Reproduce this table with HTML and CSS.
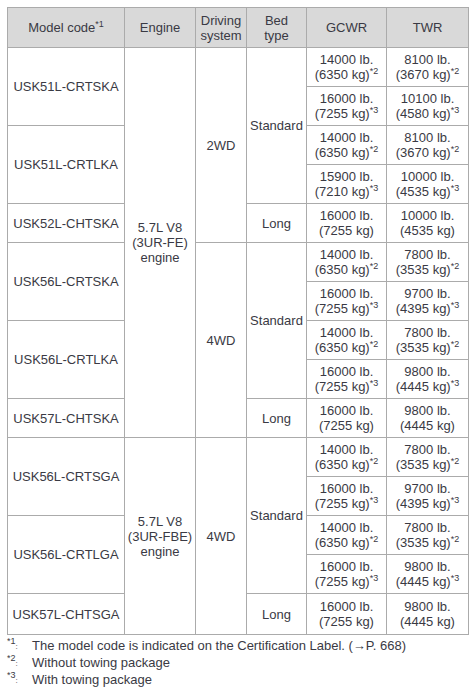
FILE: index.html
```html
<!DOCTYPE html>
<html>
<head>
<meta charset="utf-8">
<link rel="stylesheet" href="styles.css">
</head>
<body>
<div class="page">
<table class="spec">
<colgroup>
<col class="c1"><col class="c2"><col class="c3"><col class="c4"><col class="c5"><col class="c6">
</colgroup>
<thead>
<tr class="head">
<th>Model code<sup>*1</sup></th><th>Engine</th><th>Driving system</th><th>Bed<br>type</th><th>GCWR</th><th>TWR</th>
</tr>
</thead>
<tbody>
<tr>
<td rowspan="2">USK51L-CRTSKA</td>
<td rowspan="10">5.7L V8<br>(3UR-FE)<br>engine</td>
<td rowspan="5">2WD</td>
<td rowspan="4">Standard</td>
<td>14000 lb.<br>(6350 kg)<sup>*2</sup></td><td>8100 lb.<br>(3670 kg)<sup>*2</sup></td>
</tr>
<tr><td>16000 lb.<br>(7255 kg)<sup>*3</sup></td><td>10100 lb.<br>(4580 kg)<sup>*3</sup></td></tr>
<tr>
<td rowspan="2">USK51L-CRTLKA</td>
<td>14000 lb.<br>(6350 kg)<sup>*2</sup></td><td>8100 lb.<br>(3670 kg)<sup>*2</sup></td>
</tr>
<tr><td>15900 lb.<br>(7210 kg)<sup>*3</sup></td><td>10000 lb.<br>(4535 kg)<sup>*3</sup></td></tr>
<tr>
<td>USK52L-CHTSKA</td><td>Long</td>
<td>16000 lb.<br>(7255 kg)</td><td>10000 lb.<br>(4535 kg)</td>
</tr>
<tr>
<td rowspan="2">USK56L-CRTSKA</td>
<td rowspan="5">4WD</td>
<td rowspan="4">Standard</td>
<td>14000 lb.<br>(6350 kg)<sup>*2</sup></td><td>7800 lb.<br>(3535 kg)<sup>*2</sup></td>
</tr>
<tr><td>16000 lb.<br>(7255 kg)<sup>*3</sup></td><td>9700 lb.<br>(4395 kg)<sup>*3</sup></td></tr>
<tr>
<td rowspan="2">USK56L-CRTLKA</td>
<td>14000 lb.<br>(6350 kg)<sup>*2</sup></td><td>7800 lb.<br>(3535 kg)<sup>*2</sup></td>
</tr>
<tr><td>16000 lb.<br>(7255 kg)<sup>*3</sup></td><td>9800 lb.<br>(4445 kg)<sup>*3</sup></td></tr>
<tr>
<td>USK57L-CHTSKA</td><td>Long</td>
<td>16000 lb.<br>(7255 kg)</td><td>9800 lb.<br>(4445 kg)</td>
</tr>
<tr>
<td rowspan="2">USK56L-CRTSGA</td>
<td rowspan="5">5.7L V8<br>(3UR-FBE)<br>engine</td>
<td rowspan="5">4WD</td>
<td rowspan="4">Standard</td>
<td>14000 lb.<br>(6350 kg)<sup>*2</sup></td><td>7800 lb.<br>(3535 kg)<sup>*2</sup></td>
</tr>
<tr><td>16000 lb.<br>(7255 kg)<sup>*3</sup></td><td>9700 lb.<br>(4395 kg)<sup>*3</sup></td></tr>
<tr>
<td rowspan="2">USK56L-CRTLGA</td>
<td>14000 lb.<br>(6350 kg)<sup>*2</sup></td><td>7800 lb.<br>(3535 kg)<sup>*2</sup></td>
</tr>
<tr><td>16000 lb.<br>(7255 kg)<sup>*3</sup></td><td>9800 lb.<br>(4445 kg)<sup>*3</sup></td></tr>
<tr class="last">
<td>USK57L-CHTSGA</td><td>Long</td>
<td>16000 lb.<br>(7255 kg)</td><td>9800 lb.<br>(4445 kg)</td>
</tr>
</tbody>
</table>
<ul class="notes">
<li><span class="mark"><sup>*1</sup><span class="colon">:</span></span><span class="ntext">The model code is indicated on the Certification Label. (→P. 668)</span></li>
<li><span class="mark"><sup>*2</sup><span class="colon">:</span></span><span class="ntext">Without towing package</span></li>
<li><span class="mark"><sup>*3</sup><span class="colon">:</span></span><span class="ntext">With towing package</span></li>
</ul>
</div>
</body>
</html>
```
FILE: styles.css
```css
html, body {
  margin: 0;
  padding: 0;
  background: #ffffff;
}

.page {
  padding: 7px 0 0 7px;
  font-family: "Liberation Sans", Arial, sans-serif;
  font-size: 13px;
  color: #3a3a44;
}

.spec {
  border-collapse: collapse;
  table-layout: fixed;
  width: 461px;
}

.c1 { width: 117px; }
.c2 { width: 71px; }
.c3 { width: 51px; }
.c4 { width: 60px; }
.c5 { width: 80px; }
.c6 { width: 82px; }

.spec th,
.spec td {
  border: 1px solid #ababab;
  padding: 0 2px;
  text-align: center;
  vertical-align: middle;
  font-weight: normal;
  line-height: 15px;
}

.spec th {
  background: #d9d9d9;
}

.spec .head {
  height: 40px;
}

.spec tbody tr {
  height: 39px;
}

.spec tbody tr.last {
  height: 41px;
}

.spec sup {
  font-size: 9px;
  line-height: 0;
  vertical-align: 5px;
}

.notes {
  list-style: none;
  margin: 3px 0 0 0;
  padding: 0;
  line-height: 16px;
}

.notes li {
  display: flex;
}

.mark {
  width: 25px;
  flex: none;
  font-size: 9px;
}

.mark sup {
  font-size: 9px;
  line-height: 0;
  vertical-align: 5px;
}

.colon {
  font-size: 8px;
}

.ntext {
  flex: 1;
}
```
